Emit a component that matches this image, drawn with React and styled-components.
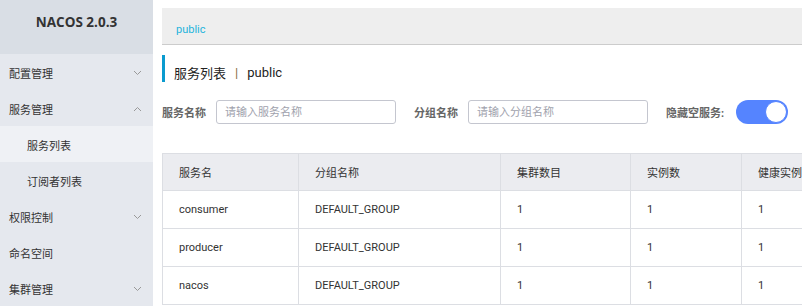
import React from 'react';
import styled, { createGlobalStyle } from 'styled-components';

const GlobalStyle = createGlobalStyle`
  html, body {
    margin: 0;
    padding: 0;
    background: #fff;
  }
  body {
    font-family: Roboto, "Noto Sans CJK SC", sans-serif;
    font-size: 11px;
    color: #333;
  }
`;

const menu = [
  { label: '配置管理', arrow: 'down' },
  { label: '服务管理', arrow: 'up' },
  { label: '服务列表', sub: true, active: true },
  { label: '订阅者列表', sub: true },
  { label: '权限控制', arrow: 'down' },
  { label: '命名空间' },
  { label: '集群管理', arrow: 'down' },
];

const columns = [
  { title: '服务名', width: 136 },
  { title: '分组名称', width: 202 },
  { title: '集群数目', width: 130 },
  { title: '实例数', width: 111 },
  { title: '健康实例数', width: 130 },
  { title: '触发保护阈值', width: 130 },
];

const services = [
  ['consumer', 'DEFAULT_GROUP', '1', '1', '1', 'false'],
  ['producer', 'DEFAULT_GROUP', '1', '1', '1', 'false'],
  ['nacos', 'DEFAULT_GROUP', '1', '1', '1', 'false'],
];

function Chevron({ dir }) {
  return (
    <ArrowIcon width="9" height="6" viewBox="0 0 9 6">
      <path
        d={dir === 'up' ? 'M1 5 L4.5 1.5 L8 5' : 'M1 1 L4.5 4.5 L8 1'}
        fill="none"
        stroke="#999"
        strokeWidth="1"
      />
    </ArrowIcon>
  );
}

export default function App() {
  return (
    <Page>
      <GlobalStyle />
      <Sidebar>
        <Logo>NACOS 2.0.3</Logo>
        {menu.map(item => (
          <MenuItem key={item.label} sub={item.sub} active={item.active}>
            <span>{item.label}</span>
            {item.arrow && <Chevron dir={item.arrow} />}
          </MenuItem>
        ))}
      </Sidebar>
      <Main>
        <NamespaceBar>
          <NamespaceLink>public</NamespaceLink>
        </NamespaceBar>
        <Content>
          <Title>
            服务列表<Divider>|</Divider>public
          </Title>
          <FilterRow>
            <Label>服务名称</Label>
            <Input placeholder="请输入服务名称" />
            <Label gapLeft>分组名称</Label>
            <Input placeholder="请输入分组名称" />
            <Label gapLeft>隐藏空服务:</Label>
            <Switch>
              <Knob />
            </Switch>
          </FilterRow>
          <Table>
            <colgroup>
              {columns.map(c => (
                <col key={c.title} style={{ width: c.width }} />
              ))}
            </colgroup>
            <thead>
              <tr>
                {columns.map(c => (
                  <Th key={c.title}>{c.title}</Th>
                ))}
              </tr>
            </thead>
            <tbody>
              {services.map(row => (
                <tr key={row[0]}>
                  {row.map((cell, i) => (
                    <Td key={i}>{cell}</Td>
                  ))}
                </tr>
              ))}
            </tbody>
          </Table>
        </Content>
      </Main>
    </Page>
  );
}

const Page = styled.div`
  display: flex;
  width: 802px;
  height: 306px;
  overflow: hidden;
`;

const Sidebar = styled.div`
  flex: 0 0 153px;
  background: #e5e8ee;
  display: flex;
  flex-direction: column;
`;

const Logo = styled.div`
  height: 56px;
  box-sizing: border-box;
  padding-top: 12px;
  background: #d9dee5;
  text-align: center;
  font-family: "Open Sans", "Noto Sans", sans-serif;
  font-weight: bold;
  font-size: 13.5px;
  line-height: 20px;
  color: #333;
`;

const MenuItem = styled.div`
  height: 36px;
  flex: 0 0 36px;
  box-sizing: border-box;
  display: flex;
  align-items: center;
  justify-content: space-between;
  padding: 1px 9px 0 ${props => (props.sub ? '27px' : '9px')};
  background: ${props => (props.active ? '#eff1f5' : 'transparent')};
  font-size: 11px;
  color: #333;
`;

const ArrowIcon = styled.svg`
  display: block;
  margin-right: 2px;
`;

const Main = styled.div`
  flex: 1;
  min-width: 0;
  padding: 8px 0 0 9px;
  overflow: hidden;
`;

const NamespaceBar = styled.div`
  height: 37px;
  box-sizing: border-box;
  background: #eee;
  border-bottom: 1px solid #ccc;
  display: flex;
  align-items: center;
  padding: 6px 0 0 14px;
`;

const NamespaceLink = styled.span`
  color: #1fb4dc;
  font-size: 11px;
`;

const Content = styled.div`
  width: 900px;
`;

const Title = styled.div`
  margin-top: 10px;
  height: 27px;
  border-left: 3px solid #0a9bcf;
  padding-left: 9px;
  display: flex;
  align-items: center;
  padding-top: 7px;
  box-sizing: border-box;
  font-size: 13px;
  color: #222;
`;

const Divider = styled.span`
  margin: 0 9px;
  color: #8a6c42;
  font-size: 13px;
`;

const FilterRow = styled.div`
  margin-top: 18px;
  display: flex;
  align-items: center;
  height: 24px;
`;

const Label = styled.span`
  font-weight: bold;
  font-size: 11px;
  color: #666;
  margin-left: ${props => (props.gapLeft ? '18px' : '0')};
  margin-right: 10px;
`;

const Input = styled.input`
  width: 180px;
  height: 24px;
  box-sizing: border-box;
  border: 1px solid #c4c6cf;
  border-radius: 3px;
  padding: 0 8px;
  font-family: Roboto, "Noto Sans CJK SC", sans-serif;
  font-size: 11px;
  outline: none;
  &::placeholder {
    color: #a0a2ad;
  }
`;

const Switch = styled.div`
  margin-left: 2px;
  width: 52px;
  height: 24px;
  border-radius: 12px;
  background: #5584ff;
  display: flex;
  align-items: center;
  justify-content: flex-end;
  padding-right: 1px;
  box-sizing: border-box;
`;

const Knob = styled.div`
  width: 22px;
  height: 22px;
  border-radius: 50%;
  background: #fff;
  box-sizing: border-box;
  border: 1px solid #5584ff;
`;

const Table = styled.table`
  margin-top: 29px;
  border-collapse: collapse;
  table-layout: fixed;
  width: 839px;
`;

const Th = styled.th`
  height: 37px;
  box-sizing: border-box;
  background: #ebecf0;
  border: 1px solid #dcdee3;
  padding: 0 16px;
  text-align: left;
  font-weight: normal;
  font-size: 11px;
  color: #333;
  white-space: nowrap;
`;

const Td = styled.td`
  height: 38px;
  box-sizing: border-box;
  border: 1px solid #dcdee3;
  padding: 0 16px;
  font-size: 11px;
  color: #333;
`;
